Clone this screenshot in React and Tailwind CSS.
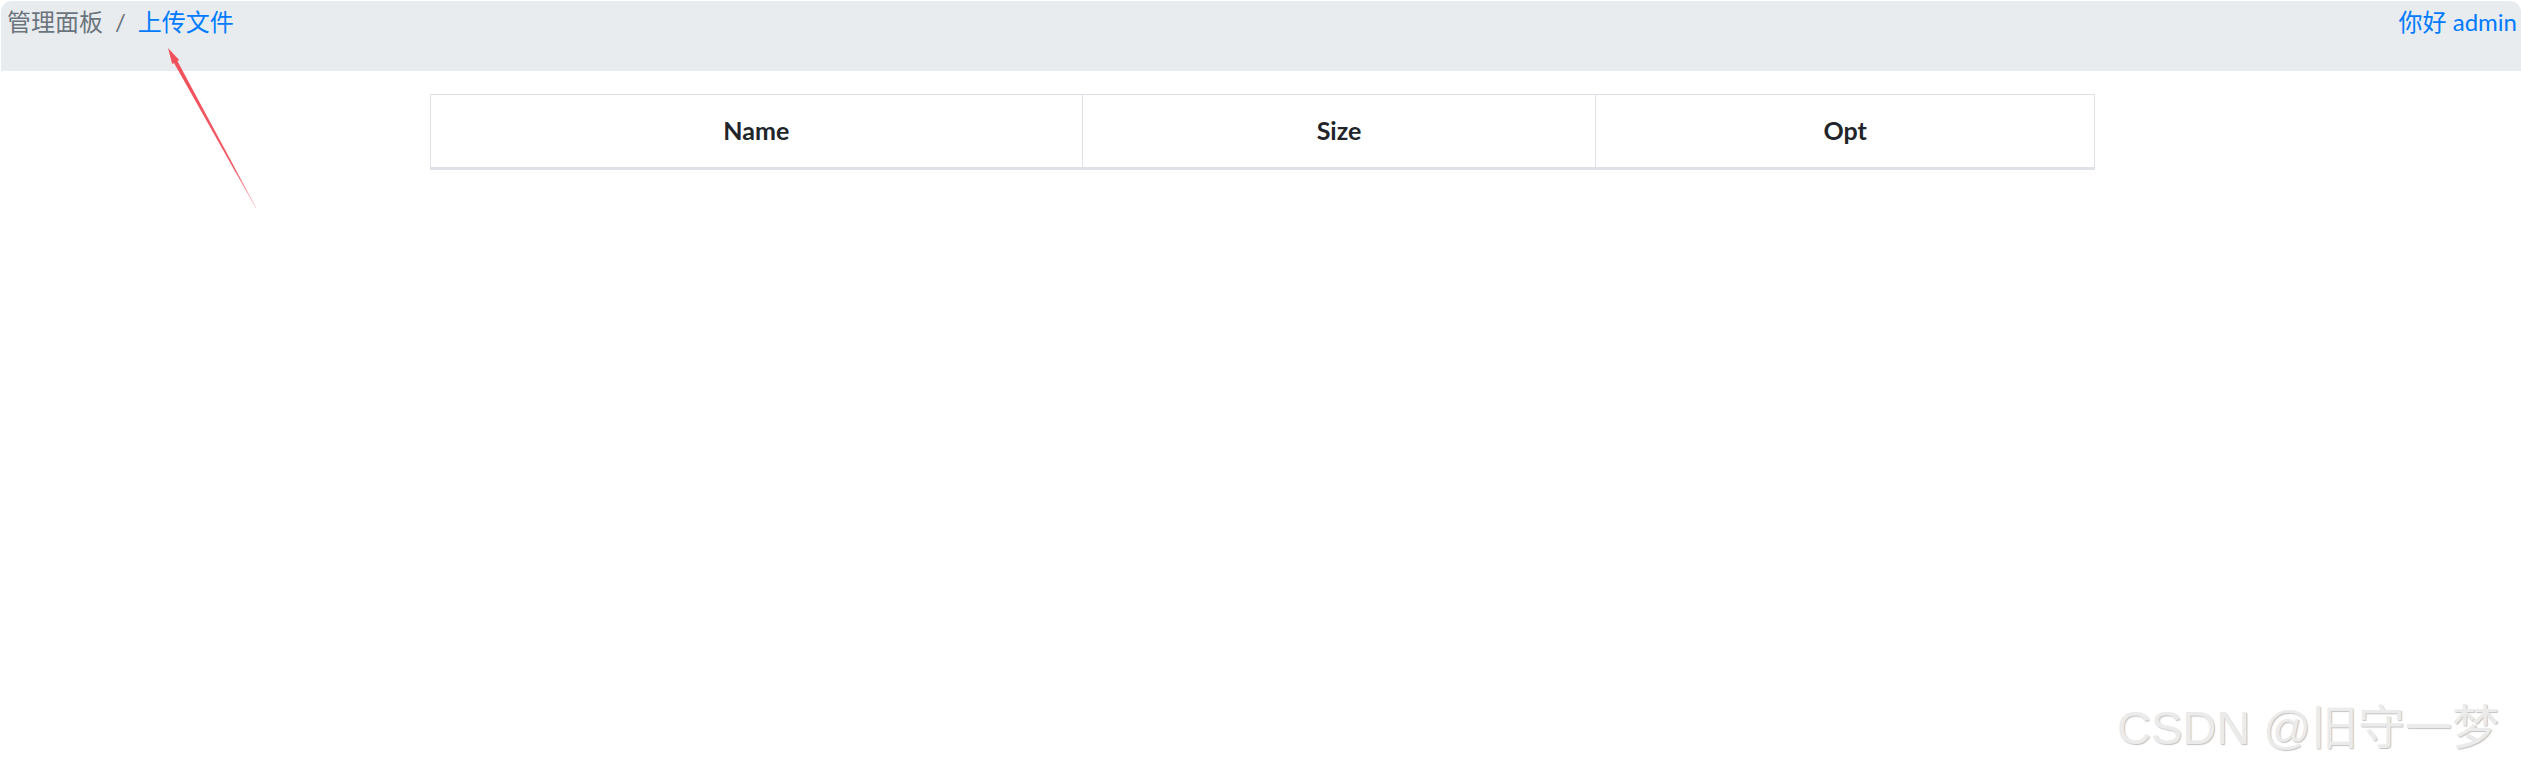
import React from 'react';

const cjk = { fontFamily: 'Lato, "Noto Sans CJK SC", sans-serif' };

const columns = [
  { key: 'name', label: 'Name', width: 'w-[652px]' },
  { key: 'size', label: 'Size', width: 'w-[514px]' },
  { key: 'opt', label: 'Opt', width: 'w-[499px]' },
];

// red annotation arrow pointing at the breadcrumb link
const Arrow = () => (
  <svg className="absolute left-0 top-0 pointer-events-none" width="300" height="230" viewBox="0 0 300 230">
    <defs>
      <linearGradient id="arrowFade" x1="168" y1="48" x2="256" y2="208" gradientUnits="userSpaceOnUse">
        <stop offset="0" stopColor="#f0505a" />
        <stop offset="0.75" stopColor="#f25a66" />
        <stop offset="1" stopColor="#ffc8d0" />
      </linearGradient>
    </defs>
    <polygon
      points="168,48 179.2,60.1 177.4,61.0 256.3,207.9 255.7,208.1 174.0,63.0 172.2,64.0"
      fill="url(#arrowFade)"
    />
  </svg>
);

export default function App() {
  return (
    <div className="relative w-full min-h-[763px] bg-white overflow-hidden" style={cjk}>
      {/* breadcrumb bar */}
      <div className="h-[70px] ml-px mt-px bg-[#e9ecef] rounded-t-[11px] flex justify-between items-start pt-[4px] pl-[6px] pr-[4px] text-[24px] leading-[34px]">
        <div className="flex items-center">
          <span className="text-[#6c757d]">管理面板</span>
          <span className="text-[#6c757d] px-[12px]">/</span>
          <a className="text-[#007bff]">上传文件</a>
        </div>
        <a className="text-[#007bff]">你好 admin</a>
      </div>

      {/* file table */}
      <div className="mt-[23px] ml-[430px] w-[1665px]">
        <table className="w-full border-collapse">
          <thead>
            <tr>
              {columns.map((c) => (
                <th
                  key={c.key}
                  className={`${c.width} h-[74px] border border-[#dee2e6] border-b-[3px] text-center align-middle text-[25px] font-bold text-[#212529]`}
                >
                  {c.label}
                </th>
              ))}
            </tr>
          </thead>
          <tbody></tbody>
        </table>
      </div>

      <Arrow />

      {/* watermark */}
      <div
        className="absolute right-[22px] bottom-[12px] text-[47px] leading-none text-[#ebebeb] [text-shadow:1px_1px_1px_#c2c2c2]"
        style={{ fontFamily: '"Liberation Sans", "Noto Sans CJK SC", sans-serif' }}
      >
        CSDN @旧守一梦
      </div>
    </div>
  );
}
